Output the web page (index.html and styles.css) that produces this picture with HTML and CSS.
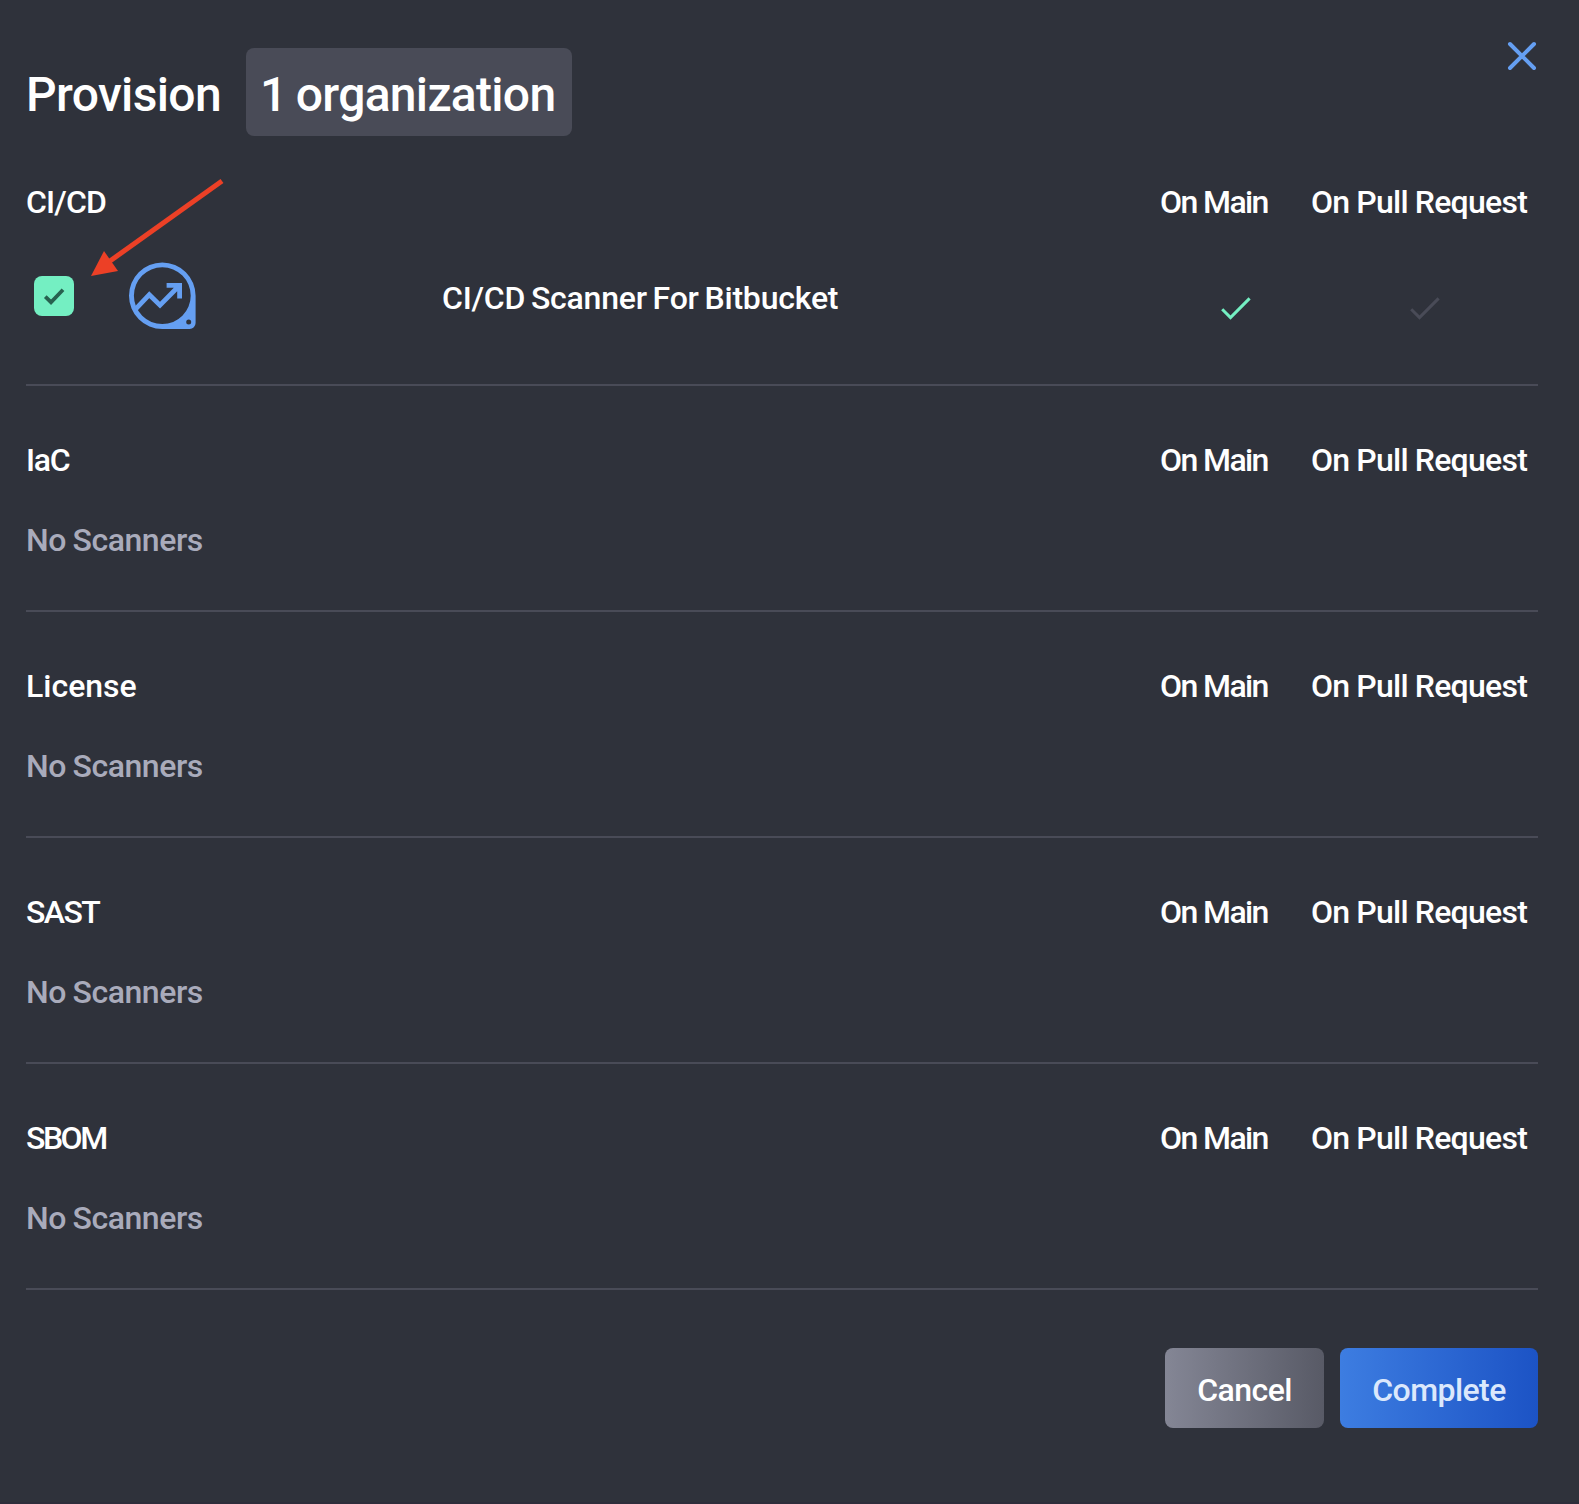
FILE: index.html
```html
<!DOCTYPE html>
<html lang="en">
<head>
    <meta charset="UTF-8" />
    <meta name="viewport" content="width=device-width, initial-scale=1.0"/>
    <title>Provision</title>
    <link rel="stylesheet" href="styles.css">
</head>
<body>
<div class="modal">
    <button class="close-button" aria-label="Close">
        <svg width="30" height="30" viewBox="0 0 30 30"><path d="M3 3L27 27M27 3L3 27"/></svg>
    </button>
    <h1 class="modal-title">
        <span class="action">Provision</span>
        <span class="count">1 organization</span>
    </h1>

    <section class="group first">
        <div class="group-header">
            <h2 class="cicd">CI/CD</h2>
            <span class="on-main">On Main</span>
            <span class="on-pr">On Pull Request</span>
        </div>
        <div class="scanner">
            <span class="checkbox" role="checkbox" aria-checked="true">
                <svg width="40" height="40" viewBox="0 0 40 40"><path d="M11.3 20.7L17 26.2L29 13.8"/></svg>
            </span>
            <svg class="scanner-icon" width="67" height="68" viewBox="0 0 67 68">
                <path class="badge" fill-rule="evenodd" d="M33.3 .4A33.3 33.3 0 0 0 33.3 67H60.6A6 6 0 0 0 66.6 61V33.7A33.3 33.3 0 0 0 33.3 .4ZM33.3 5.3A28.4 28.4 0 1 1 33.3 62.1A28.4 28.4 0 1 1 33.3 5.3ZM59.7 57.6A2.5 2.5 0 1 0 59.7 62.6A2.5 2.5 0 1 0 59.7 57.6Z"/>
                <path class="trend" d="M6.6 47.1L20.3 32.7L31 43.1L50.2 23.8M37.6 23.4H50.6V36.6"/>
            </svg>
            <span class="scanner-name">CI/CD Scanner For Bitbucket</span>
            <svg class="tick active" width="30" height="24" viewBox="0 0 30 24"><path d="M1.2 13.3L9.5 21.6L28.6 2.4"/></svg>
            <svg class="tick" width="30" height="24" viewBox="0 0 30 24"><path d="M1.2 13.3L9.5 21.6L28.6 2.4"/></svg>
        </div>
    </section>

    <section class="group">
        <div class="group-header">
            <h2 class="iac">IaC</h2>
            <span class="on-main">On Main</span>
            <span class="on-pr">On Pull Request</span>
        </div>
        <p class="empty">No Scanners</p>
    </section>

    <section class="group">
        <div class="group-header">
            <h2>License</h2>
            <span class="on-main">On Main</span>
            <span class="on-pr">On Pull Request</span>
        </div>
        <p class="empty">No Scanners</p>
    </section>

    <section class="group">
        <div class="group-header">
            <h2 class="sast">SAST</h2>
            <span class="on-main">On Main</span>
            <span class="on-pr">On Pull Request</span>
        </div>
        <p class="empty">No Scanners</p>
    </section>

    <section class="group">
        <div class="group-header">
            <h2 class="sbom">SBOM</h2>
            <span class="on-main">On Main</span>
            <span class="on-pr">On Pull Request</span>
        </div>
        <p class="empty">No Scanners</p>
    </section>

    <div class="actions">
        <button class="button cancel">Cancel</button>
        <button class="button complete">Complete</button>
    </div>

    <!-- arrow pointing at the checkbox -->
    <svg class="pointer" width="140" height="104" viewBox="0 0 140 104">
        <path class="shaft" d="M136 6L24 86"/>
        <path class="head" d="M5 101L18 76L32 96Z"/>
    </svg>
</div>
</body>
</html>
```
FILE: styles.css
```css
* { box-sizing: border-box; }
html, body { margin: 0; padding: 0; }
body {
    background: #2f323b; color: #fff;
    font-family: 'Roboto', sans-serif; font-size: 32px; font-weight: 500; line-height: 40px;
}
h1, h2, p { margin: 0; font-size: inherit; font-weight: 500; }
svg { display: block; fill: none; }

.modal {
    position: relative; height: 1504px;
    padding: 48px 41px 0 26px; border-bottom: 2px solid #2e2d3b;
}
.close-button {
    position: absolute; top: 41px; right: 42px;
    padding: 0; border: none; background: none; cursor: pointer;
}
.close-button svg { stroke: #659ff2; stroke-width: 4; stroke-linecap: round; }

.modal-title { display: flex; height: 88px; font-size: 48px; line-height: 83px; white-space: nowrap; }
.modal-title span { padding-top: 5px; }
.modal-title .action { width: 220px; letter-spacing: -0.65px; }
.modal-title .count { width: 326px; padding-left: 14px; border-radius: 8px; background: #494b57; letter-spacing: -0.7px; word-spacing: -2px; }

.group { padding: 54px 0 50px; border-bottom: 2px solid #494b57; }
.group.first { padding: 46px 0 54px; }
.group-header { display: grid; grid-template-columns: 1fr 151px 227px; margin-bottom: 40px; white-space: nowrap; }
.on-main { letter-spacing: -1.6px; }
.on-pr { letter-spacing: -0.7px; word-spacing: -0.5px; }
.cicd { letter-spacing: -0.85px; }
.iac { letter-spacing: -1.3px; }
.sast { letter-spacing: -1.6px; }
.sbom { letter-spacing: -2.5px; }
.empty { color: #a9abbb; letter-spacing: -0.44px; word-spacing: -1px; }

.scanner {
    display: grid; grid-template-columns: 103px 313px 1fr 151px 227px;
    align-items: center; height: 68px;
}
.checkbox { width: 40px; height: 40px; margin-left: 8px; border-radius: 8px; background: #74efc2; }
.checkbox path { stroke: #27614f; stroke-width: 3.8; }
.scanner-icon .badge { fill: #659ff2; }
.scanner-icon .trend { stroke: #659ff2; stroke-width: 4.8; }
.scanner-name { padding-top: 4px; letter-spacing: -0.21px; word-spacing: -2px; }
.tick { justify-self: center; margin: 24px 0 0 1.5px; stroke: #494b57; stroke-width: 3; }
.tick.active { stroke: #74efc2; }

.actions { display: flex; justify-content: flex-end; gap: 16px; margin-top: 58px; }
.button {
    height: 80px; padding: 4px 0 0; border: none; border-radius: 8px;
    font: inherit; cursor: pointer;
}
.cancel { width: 159px; color: #fff; background: linear-gradient(90deg, #848695, #585a66); letter-spacing: -0.55px; }
.complete { width: 198px; color: #dbe8fc; background: linear-gradient(90deg, #3d7de1, #1c53c5); letter-spacing: -0.55px; }

.pointer { position: absolute; left: 86px; top: 175px; pointer-events: none; }
.pointer .shaft { stroke: #ec4026; stroke-width: 5; }
.pointer .head { fill: #ec4026; }
```
